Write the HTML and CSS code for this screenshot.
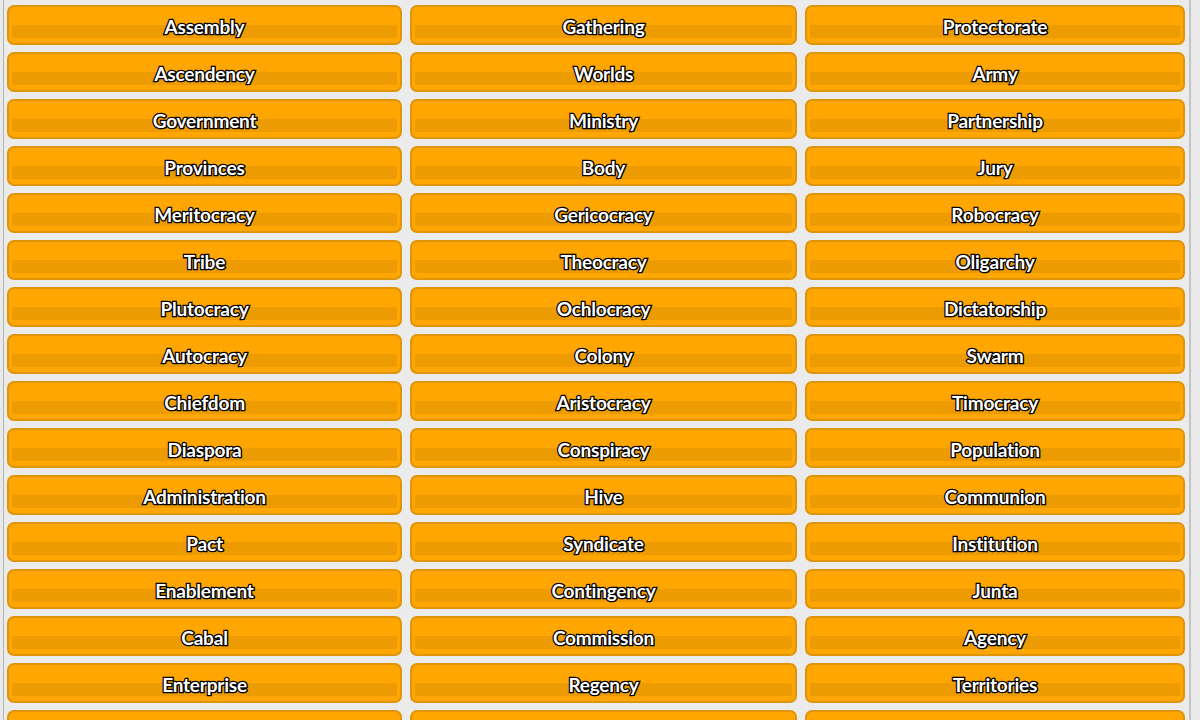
FILE: index.html
```html
<!DOCTYPE html>
<html>
<head>
<meta charset="utf-8">
<link rel="stylesheet" href="styles.css">
</head>
<body>
<div class="frame">
  <div class="grid">
    <div class="btn"><span>Assembly</span></div>
    <div class="btn"><span>Gathering</span></div>
    <div class="btn"><span>Protectorate</span></div>
    <div class="btn"><span>Ascendency</span></div>
    <div class="btn"><span>Worlds</span></div>
    <div class="btn"><span>Army</span></div>
    <div class="btn"><span>Government</span></div>
    <div class="btn"><span>Ministry</span></div>
    <div class="btn"><span>Partnership</span></div>
    <div class="btn"><span>Provinces</span></div>
    <div class="btn"><span>Body</span></div>
    <div class="btn"><span>Jury</span></div>
    <div class="btn"><span>Meritocracy</span></div>
    <div class="btn"><span>Gericocracy</span></div>
    <div class="btn"><span>Robocracy</span></div>
    <div class="btn"><span>Tribe</span></div>
    <div class="btn"><span>Theocracy</span></div>
    <div class="btn"><span>Oligarchy</span></div>
    <div class="btn"><span>Plutocracy</span></div>
    <div class="btn"><span>Ochlocracy</span></div>
    <div class="btn"><span>Dictatorship</span></div>
    <div class="btn"><span>Autocracy</span></div>
    <div class="btn"><span>Colony</span></div>
    <div class="btn"><span>Swarm</span></div>
    <div class="btn"><span>Chiefdom</span></div>
    <div class="btn"><span>Aristocracy</span></div>
    <div class="btn"><span>Timocracy</span></div>
    <div class="btn"><span>Diaspora</span></div>
    <div class="btn"><span>Conspiracy</span></div>
    <div class="btn"><span>Population</span></div>
    <div class="btn"><span>Administration</span></div>
    <div class="btn"><span>Hive</span></div>
    <div class="btn"><span>Communion</span></div>
    <div class="btn"><span>Pact</span></div>
    <div class="btn"><span>Syndicate</span></div>
    <div class="btn"><span>Institution</span></div>
    <div class="btn"><span>Enablement</span></div>
    <div class="btn"><span>Contingency</span></div>
    <div class="btn"><span>Junta</span></div>
    <div class="btn"><span>Cabal</span></div>
    <div class="btn"><span>Commission</span></div>
    <div class="btn"><span>Agency</span></div>
    <div class="btn"><span>Enterprise</span></div>
    <div class="btn"><span>Regency</span></div>
    <div class="btn"><span>Territories</span></div>
    <div class="btn"></div>
    <div class="btn"></div>
    <div class="btn"></div>
  </div>
</div>
</body>
</html>
```

FILE: styles.css
```css
html, body {
  margin: 0;
  padding: 0;
  width: 1200px;
  height: 720px;
  overflow: hidden;
  background: #e9e9e9;
}

.frame {
  margin-left: 3px;
  width: 1188px;
  height: 720px;
  border-left: 1px solid #b4b4b4;
  border-right: 2px solid #c4c4c4;
  box-sizing: border-box;
  background: #ebebeb;
}

.grid {
  display: grid;
  grid-template-columns: 395px 387px 380px;
  grid-auto-rows: 40px;
  column-gap: 8px;
  row-gap: 7px;
  padding: 5px 0 0 3px;
}

.btn {
  position: relative;
  box-sizing: border-box;
  background: #ffa602;
  border: 2px solid #de950a;
  border-radius: 7px;
  display: flex;
  align-items: center;
  justify-content: center;
  overflow: hidden;
}

.btn::before {
  content: "";
  position: absolute;
  left: 3px;
  right: 3px;
  top: 18px;
  height: 13px;
  background: #ec9b02;
  border-radius: 2px;
}

.btn span {
  position: relative;
  font-family: "Lato", "Open Sans", sans-serif;
  font-weight: 700;
  font-size: 19px;
  letter-spacing: -0.2px;
  color: #ffffff;
  padding-top: 3px;
  -webkit-text-stroke: 2.6px #000000;
  paint-order: stroke fill;
  text-shadow: 1px 1px 0 #000;
}
```
